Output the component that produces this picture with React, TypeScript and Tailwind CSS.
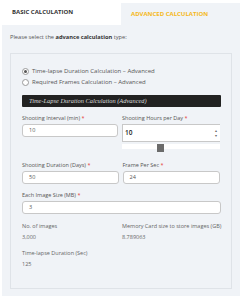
import React from "react";

const font = { fontFamily: '"Open Sans", "Liberation Sans", sans-serif' };

function Label({ text }: { text: string }) {
  return (
    <div className="text-[5.5px] leading-[8px] text-[#555] whitespace-nowrap">
      {text} <span className="text-[#e53935]">*</span>
    </div>
  );
}

function Radio({ checked, label }: { checked?: boolean; label: string }) {
  return (
    <div className="flex items-center gap-[3px] h-[11px]">
      <span className="w-[7px] h-[7px] rounded-full border border-[#9a9a9a] bg-white flex items-center justify-center">
        {checked && <span className="w-[3px] h-[3px] rounded-full bg-[#555]" />}
      </span>
      <span className="text-[6px] text-[#555]">{label}</span>
    </div>
  );
}

export default function App() {
  return (
    <div className="w-[244px] h-[300px] bg-white pt-[3px] px-[2px]" style={font}>
      {/* tabs */}
      <div className="flex h-[22px] w-[238px]">
        <div className="w-[119px] bg-white flex items-center pl-[10px] text-[6px] font-bold text-[#333] -mt-[3px] h-[25px]">
          BASIC CALCULATION
        </div>
        <div className="w-[119px] bg-[#f0f3f7] flex items-center pl-[10px] text-[6px] font-bold text-[#f5b820]">
          ADVANCED CALCULATION
        </div>
      </div>

      {/* panel */}
      <div className="w-[238px] h-[271px] bg-[#f0f3f7] px-[8px] pt-[8px]">
        <div className="text-[5.7px] leading-[8px] text-[#555]">
          Please select the <span className="font-bold text-[#333]">advance calculation</span> type:
        </div>

        <div className="mt-[12px] h-[236px] border border-[#dfe3e8] px-[11px] pt-[12px]">
          <Radio checked label="Time-lapse Duration Calculation – Advanced" />
          <Radio label="Required Frames Calculation – Advanced" />

          <div
            className="mt-[7px] w-[199px] h-[12px] bg-[#222] rounded-[1px] flex items-center pl-[7px] text-[6.4px] italic text-[#dcdcdc] whitespace-nowrap"
            style={{ fontFamily: '"Liberation Serif", serif' }}
          >
            Time-Lapse Duration Calculation (Advanced)
          </div>

          <div className="mt-[7px] flex gap-[4px]">
            <div className="w-[97px]">
              <Label text="Shooting Interval (min)" />
              <div className="mt-[2px] h-[13px] bg-white border border-[#c8c8c8] rounded-[3px] flex items-center pl-[6px] text-[5.5px] text-[#555]">
                10
              </div>
            </div>
            <div className="w-[98px]">
              <Label text="Shooting Hours per Day" />
              <div className="mt-[2px] h-[18px] bg-white border border-[#c8c8c8] border-r-0 flex items-center pl-[2px] text-[6.5px] font-semibold text-[#222]">
                <span className="flex-1">10</span>
                <span className="w-[8px] flex flex-col items-center text-[4px] leading-[5px] text-[#666] font-normal">
                  <span>▴</span>
                  <span>▾</span>
                </span>
              </div>
              {/* range slider */}
              <div className="mt-[2px] h-[8px] relative">
                <div className="mt-[1.5px] w-[98px] h-[5px] bg-white" />
                <span className="absolute left-[35px] top-0 w-[7px] h-[8px] bg-[#6b6b6b]" />
              </div>
            </div>
          </div>

          <div className="mt-[9px] flex gap-[4px]">
            <div className="w-[97px]">
              <Label text="Shooting Duration (Days)" />
              <div className="mt-[2px] h-[13px] bg-white border border-[#c8c8c8] rounded-[3px] flex items-center pl-[6px] text-[5.5px] text-[#555]">
                50
              </div>
            </div>
            <div className="w-[98px]">
              <Label text="Frame Per Sec" />
              <div className="mt-[2px] h-[13px] bg-white border border-[#c8c8c8] rounded-[3px] flex items-center pl-[6px] text-[5.5px] text-[#555]">
                24
              </div>
            </div>
          </div>

          <div className="mt-[7px]">
            <Label text="Each Image Size (MB)" />
            <div className="mt-[2px] w-[199px] h-[13px] bg-white border border-[#c8c8c8] rounded-[3px] flex items-center pl-[6px] text-[5.5px] text-[#555]">
              3
            </div>
          </div>

          <div className="mt-[8px] flex gap-[4px] text-[5.5px] leading-[8px] text-[#666] whitespace-nowrap">
            <div className="w-[97px]">
              <div>No. of images</div>
              <div className="mt-[3px]">3,000</div>
            </div>
            <div className="w-[98px]">
              <div>Memory Card size to store images (GB)</div>
              <div className="mt-[3px]">8.789063</div>
            </div>
          </div>

          <div className="mt-[8px] text-[5.5px] leading-[8px] text-[#666]">
            <div>Time-lapse Duration (Sec)</div>
            <div className="mt-[3px]">125</div>
          </div>
        </div>
      </div>
    </div>
  );
}
